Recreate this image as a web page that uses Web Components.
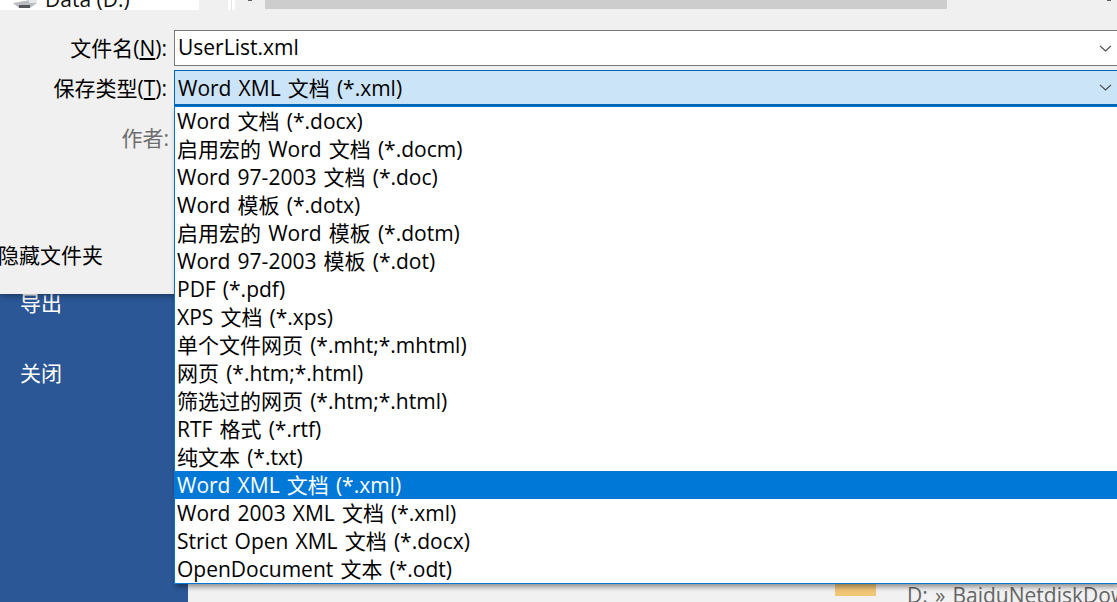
<!DOCTYPE html>
<html lang="zh">
<head>
<meta charset="utf-8">
<title>另存为</title>
<style>
  html, body { margin: 0; height: 100%; overflow: hidden; }
  body { font-family: "Open Sans", "Noto Sans CJK SC", sans-serif; }
</style>
</head>
<body>
<backstage-view>
  <nav-item slot="nav" style="margin-top:289px">导出</nav-item>
  <nav-item slot="nav" style="margin-top:42px">关闭</nav-item>
  <save-dialog slot="dialog"></save-dialog>
</backstage-view>

<script>
const FILE_TYPES = [
  'Word 文档 (*.docx)',
  '启用宏的 Word 文档 (*.docm)',
  'Word 97-2003 文档 (*.doc)',
  'Word 模板 (*.dotx)',
  '启用宏的 Word 模板 (*.dotm)',
  'Word 97-2003 模板 (*.dot)',
  'PDF (*.pdf)',
  'XPS 文档 (*.xps)',
  '单个文件网页 (*.mht;*.mhtml)',
  '网页 (*.htm;*.html)',
  '筛选过的网页 (*.htm;*.html)',
  'RTF 格式 (*.rtf)',
  '纯文本 (*.txt)',
  'Word XML 文档 (*.xml)',
  'Word 2003 XML 文档 (*.xml)',
  'Strict Open XML 文档 (*.docx)',
  'OpenDocument 文本 (*.odt)'
];

const CHEVRON = `<svg width="13" height="7" viewBox="0 0 13 7" fill="none" stroke="#444" stroke-width="1.1"><path d="M1 .8 6.5 6 12 .8"/></svg>`;

class BackstageView extends HTMLElement {
  constructor() {
    super();
    this.attachShadow({ mode: 'open' });
    this.shadowRoot.innerHTML = `
      <style>
        :host { display: grid; grid-template-columns: 188px 1fr; width: 1117px; height: 602px; position: relative; overflow: hidden; background: #f1f1f1; }
        .nav { background: #2b5797; display: flex; flex-direction: column; }
        .main { position: relative; }
        .folder { position: absolute; left: 647px; top: 583px; width: 41px; height: 13px; background: #f0c677; }
        .path { position: absolute; left: 719px; top: 581px; font-size: 21px; line-height: 28px; word-spacing: 1.7px; color: #666; white-space: nowrap; }
      </style>
      <div class="nav"><slot name="nav"></slot></div>
      <div class="main">
        <div class="folder"></div>
        <div class="path">D: » BaiduNetdiskDownload</div>
      </div>
      <slot name="dialog"></slot>
    `;
  }
}

class NavItem extends HTMLElement {
  constructor() {
    super();
    this.attachShadow({ mode: 'open' });
    this.shadowRoot.innerHTML = `
      <style>
        :host { display: block; padding-left: 20px; height: 28px; font-size: 21px; line-height: 28px; color: #fff; }
      </style>
      <slot></slot>
    `;
  }
}

class SaveDialog extends HTMLElement {
  constructor() {
    super();
    this.attachShadow({ mode: 'open' });
    this.shadowRoot.innerHTML = `
      <style>
        :host { display: block; position: absolute; left: 0; top: 0; width: 1117px; height: 294px; background: #f0f0f0; box-shadow: 0 2px 6px rgba(0,0,0,.35); color: #000; font-size: 21px; }
        .top { display: flex; height: 10px; overflow: hidden; }
        .tree { width: 199px; background: #fff; display: flex; gap: 7px; padding-left: 12px; box-sizing: border-box; }
        .drive { line-height: 28px; margin-top: -15px; color: #111; }
        .disk { width: 26px; height: 10px; flex: none; }
        .gap { width: 29px; }
        .pane-edge { width: 7px; background: linear-gradient(90deg, #fff 3px, #e6e6e6 3px, #e6e6e6 4px, #fff 4px); }
        .scroll { flex: 1; display: flex; background: #f0f0f0; }
        .scroll-btn { width: 30px; display: flex; justify-content: center; }
        .scroll-btn i { display: block; width: 4px; height: 1px; background: #606060; }
        .thumb { width: 682px; height: 9px; background: #cdcdcd; }
        .spacer { flex: 1; }
        .scroll-end { width: 10px; display: flex; }
        .scroll-end i { display: block; width: 4px; height: 1px; background: #606060; }
        .form { display: grid; grid-template-columns: 174px 1fr; row-gap: 4px; margin-top: 20px; }
        .row-label { display: flex; align-items: center; justify-content: flex-end; padding-right: 7px; line-height: 36px; white-space: nowrap; }
        .row-label u { text-underline-offset: 2px; }
        .author { color: #6d6d6d; margin-top: 14px; padding-right: 5px; height: 28px; }
        .hidden-toggle { position: absolute; left: -2px; top: 241px; line-height: 28px; white-space: nowrap; }
      </style>
      <div class="top">
        <div class="tree">
          <svg class="disk" viewBox="0 0 26 10"><path d="M1 3 18 0h7v3l-7 5H7z" fill="#b9bcc0"/><path d="M7 5l11 0v3H7z" fill="#53575c"/><path d="M17 0h8v3h-8z" fill="#e4e6e8"/></svg>
          <span class="drive">Data (D:)</span>
        </div>
        <div class="gap"></div>
        <div class="pane-edge"></div>
        <div class="scroll">
          <div class="scroll-btn"><i></i></div>
          <div class="thumb"></div>
          <div class="spacer"></div>
          <div class="scroll-end"><i></i></div>
        </div>
      </div>
      <div class="form">
        <div class="row-label"><span>文件名(<u>N</u>):</span></div>
        <combo-field value="UserList.xml"></combo-field>
        <div class="row-label"><span>保存类型(<u>T</u>):</span></div>
        <combo-field value="Word XML 文档 (*.xml)" open></combo-field>
        <div class="row-label author"><span>作者:</span></div>
      </div>
      <div class="hidden-toggle">隐藏文件夹</div>
      <type-list></type-list>
    `;
  }
}

class ComboField extends HTMLElement {
  static get observedAttributes() { return ['value']; }
  constructor() {
    super();
    this.attachShadow({ mode: 'open' });
  }
  connectedCallback() { this.render(); }
  attributeChangedCallback() { this.render(); }
  render() {
    this.shadowRoot.innerHTML = `
      <style>
        :host { display: flex; align-items: center; justify-content: space-between; height: 36px; box-sizing: border-box; border: solid #7a7a7a; border-width: 1px 0 1px 1px; background: #fff; padding: 0 5px 0 3px; font-size: 21px; word-spacing: 1.7px; color: #000; }
        :host([open]) { background: #cce4f7; border: solid #0067b8; border-width: 1px 0 2px 1px; }
        span { white-space: nowrap; position: relative; top: -1px; }
        svg { flex: none; }
      </style>
      <span>${this.getAttribute('value') || ''}</span>${CHEVRON}
    `;
  }
}

class TypeList extends HTMLElement {
  constructor() {
    super();
    this.attachShadow({ mode: 'open' });
    this.shadowRoot.innerHTML = `
      <style>
        :host { display: block; position: absolute; left: 174px; top: 106px; right: 0; box-sizing: border-box; background: #fff; border: solid #0078d7; border-width: 1px 0 1px 1px; box-shadow: 2px 3px 5px rgba(0,0,0,.4); font-size: 21px; word-spacing: 1.7px; color: #000; }
        div { height: 28px; line-height: 28px; padding-left: 2px; white-space: nowrap; }
        .sel { background: #0078d7; color: #fff; }
      </style>
      ${FILE_TYPES.map((t, i) => `<div class="${i === 13 ? 'sel' : ''}">${t}</div>`).join('')}
    `;
  }
}

customElements.define('nav-item', NavItem);
customElements.define('combo-field', ComboField);
customElements.define('type-list', TypeList);
customElements.define('save-dialog', SaveDialog);
customElements.define('backstage-view', BackstageView);
</script>
</body>
</html>
